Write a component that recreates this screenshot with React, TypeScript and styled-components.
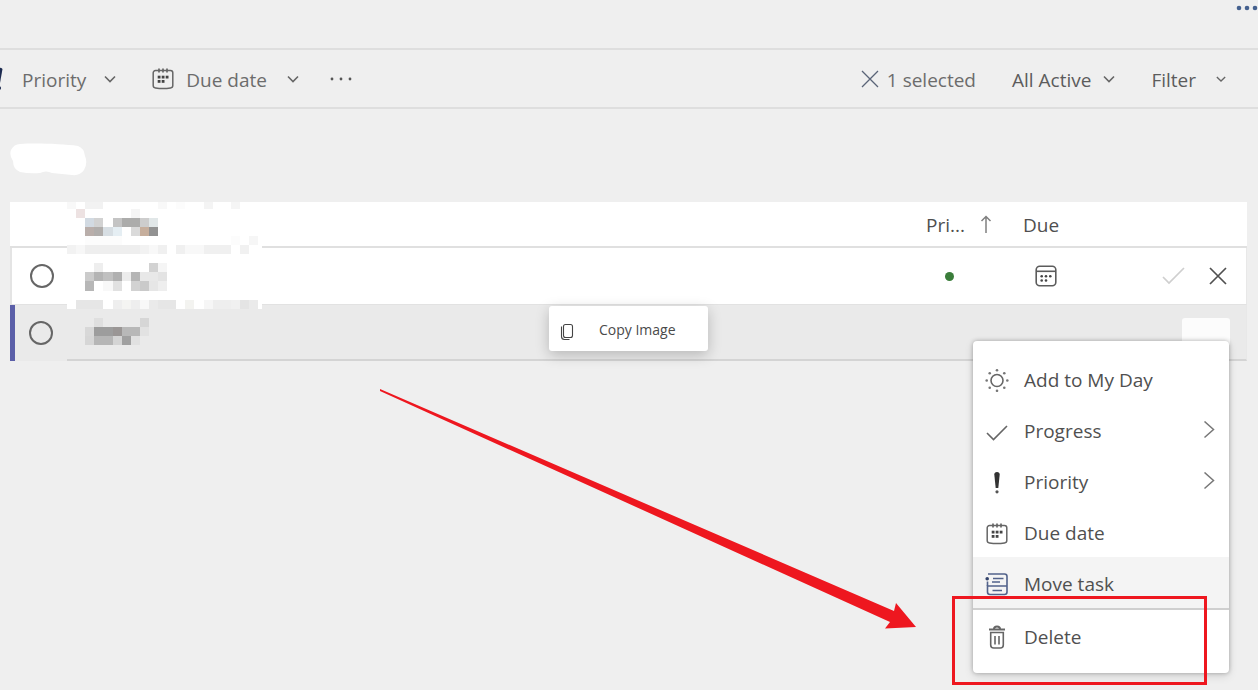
import React from "react";
import styled, { createGlobalStyle } from "styled-components";

const GlobalStyle = createGlobalStyle`
  * { box-sizing: border-box; }
  body { margin: 0; background: #efefef; }
  button { font: inherit; color: inherit; background: none; border: 0; padding: 0; cursor: pointer; }
`;

const Page = styled.div`
  position: relative;
  min-height: 100vh;
  overflow: hidden;
  background: #efefef;
  color: #555;
  font-family: "Open Sans", "Noto Sans", sans-serif;
  font-size: 19px;
  line-height: 26px;
`;

const TopBar = styled.header`
  display: flex;
  justify-content: flex-end;
  height: 48px;
`;

const MoreTop = styled.button`
  align-self: flex-start;
  height: 16px;
  line-height: 0;
`;

const Toolbar = styled.nav`
  display: flex;
  align-items: center;
  justify-content: space-between;
  height: 61px;
  border-top: 2px solid #dedede;
  border-bottom: 2px solid #dedede;
  padding: 2px 32px 0 0;
`;

const ToolGroup = styled.div<{ $gap: number }>`
  display: flex;
  align-items: center;
  gap: ${(p) => p.$gap}px;
`;

const ToolButton = styled.button<{ $gap?: number; $strong?: boolean }>`
  display: flex;
  align-items: center;
  gap: ${(p) => p.$gap ?? 12}px;
  white-space: nowrap;
  color: ${(p) => (p.$strong ? "#5c5c5c" : "#6c6c6c")};
  svg { flex: none; margin-bottom: 2px; }
`;

const Trailing = styled.span<{ $space: number }>`
  display: flex;
  margin-left: ${(p) => p.$space}px;
`;

const Main = styled.main`
  padding: 34px 11px 0 10px;
`;

const Heading = styled.h2`
  margin: 0 0 25px;
  height: 34px;
  line-height: 0;
`;

const TableArea = styled.div`
  position: relative;
`;

const TaskTable = styled.table`
  width: 100%;
  table-layout: fixed;
  border-collapse: separate;
  border-spacing: 0;
  th, td { padding: 0; text-align: left; font-weight: 400; vertical-align: middle; }
  th { color: #4f4f4f; }
`;

const HeadRow = styled.tr`
  height: 46px;
  background: #fff;
  th { border-bottom: 2px solid #e0e0e0; padding-top: 2px; }
`;

const BodyRow = styled.tr<{ $selected?: boolean }>`
  height: ${(p) => (p.$selected ? 56 : 57)}px;
  background: ${(p) => (p.$selected ? "#eaeaea" : "#fff")};
  td { border-bottom: ${(p) => (p.$selected ? 2 : 1)}px solid ${(p) => (p.$selected ? "#d4d4d4" : "#e2e2e2")}; }
  td:first-child {
    border-left: ${(p) => (p.$selected ? "5px solid #5b5fa8" : "2px solid #e4e4e4")};
    padding-left: ${(p) => (p.$selected ? 14 : 18)}px;
    ${(p) => (p.$selected ? "border-bottom: 0;" : "")}
  }
  td:last-child { border-right: 1px solid #e8e8e8; }
`;

const Col = styled.col<{ $w?: number }>`
  width: ${(p) => (p.$w ? `${p.$w}px` : "auto")};
`;

const Round = styled.input`
  appearance: none;
  display: block;
  width: 24px;
  height: 24px;
  margin: 0;
  border: 2px solid #666;
  border-radius: 50%;
`;

const SortLabel = styled.span`
  display: flex;
  align-items: center;
  gap: 14px;
`;

const PriorityDot = styled.span`
  display: block;
  width: 9px;
  height: 9px;
  margin-left: 19px;
  border-radius: 50%;
  background: #3a7d3a;
`;

const IconButton = styled.button`
  display: block;
  line-height: 0;
`;

const DueCell = styled.td`
  && { padding-left: 12px; }
`;

const Actions = styled.div<{ $right: number }>`
  display: flex;
  justify-content: flex-end;
  align-items: center;
  gap: 24px;
  padding-right: ${(p) => p.$right}px;
`;

const RowMore = styled.button`
  width: 48px;
  height: 28px;
  border-radius: 3px;
  background: #fcfcfc;
`;

const Mosaic = styled.svg`
  position: absolute;
  left: 57px;
  top: 0;
  pointer-events: none;
`;

const CopyTip = styled.button`
  position: absolute;
  left: calc(50% - 80px);
  top: 306px;
  display: flex;
  align-items: center;
  gap: 24px;
  width: 159px;
  height: 45px;
  padding: 2px 0 0 11px;
  border-radius: 3px;
  background: #fff;
  box-shadow: 0 4px 14px rgba(0, 0, 0, 0.22);
  && { font-size: 14px; color: #4a4a4a; }
  svg { margin-top: 4px; }
`;

const MenuLayer = styled.div`
  position: absolute;
  right: 29px;
  top: 341px;
  width: 256px;
`;

const Menu = styled.ul`
  list-style: none;
  margin: 0;
  padding: 12px 0;
  border-radius: 4px;
  background: #fff;
  box-shadow: 0 0 4px rgba(0, 0, 0, 0.28), 0 3px 10px rgba(0, 0, 0, 0.12);
`;

const MenuItem = styled.li<{ $hover?: boolean; $divided?: boolean }>`
  background: ${(p) => (p.$hover ? "#f4f4f4" : "transparent")};
  border-top: ${(p) => (p.$divided ? "2px solid #cfcfcf" : "0")};
`;

const MenuButton = styled.button`
  display: flex;
  align-items: center;
  gap: 15px;
  width: 100%;
  height: 51px;
  padding: 2px 14px 0 12px;
  text-align: left;
  color: #505050;
`;

const MenuText = styled.span`
  flex: 1;
`;

const Highlight = styled.div`
  position: absolute;
  left: -21px;
  right: 22px;
  top: 255px;
  height: 89px;
  border: 3px solid #ee171f;
  pointer-events: none;
`;

const Arrow = styled.svg`
  position: absolute;
  right: 342px;
  top: 389px;
  pointer-events: none;
`;

const Chevron = ({ size = 12, color = "#666" }: { size?: number; color?: string }) => (
  <svg width={size} height={size} viewBox="0 0 12 12" fill="none" stroke={color} strokeWidth="1.6">
    <path d="M1 3.5 6 8.5 11 3.5" />
  </svg>
);

const Dots = ({ color, r, step, width }: { color: string; r: number; step: number; width: number }) => (
  <svg width={width} height="16" fill={color}>
    {[0, 1, 2].map((i) => (
      <circle key={i} cx={3 + i * step} cy="8" r={r} />
    ))}
  </svg>
);

const CalendarIcon = () => (
  <svg width="22" height="22" viewBox="0 0 22 22" fill="none" stroke="#666" strokeWidth="1.5">
    <path d="M3.5 2.5h15a2.3 2.3 0 0 1 2.3 2.3v12.7c0 1.6-1 2.3-2.3 2.5-5 .8-10 .8-15 0-1.3-.2-2.3-.9-2.3-2.5V4.8A2.3 2.3 0 0 1 3.5 2.5Z" />
    <path d="M7 .5v4M11 .5v4M15 .5v4" strokeWidth="1.7" />
    <g fill="#444" stroke="none">
      <rect x="9.7" y="7.7" width="2.8" height="2.8" /><rect x="13.7" y="7.7" width="2.8" height="2.8" /><rect x="5.7" y="7.7" width="2.8" height="2.8" />
      <rect x="5.7" y="12" width="2.8" height="2.8" /><rect x="9.7" y="12" width="2.8" height="2.8" />
    </g>
  </svg>
);

const DueIcon = () => (
  <svg width="22" height="22" viewBox="0 0 22 22" fill="none" stroke="#5c5c5c" strokeWidth="1.6">
    <rect x="1.2" y="1.2" width="19.6" height="19.6" rx="3.5" />
    <path d="M1.2 6.3h19.6" />
    <g fill="#444" stroke="none">
      <circle cx="6.7" cy="11.3" r="1.3" /><circle cx="11" cy="11.3" r="1.3" /><circle cx="15.3" cy="11.3" r="1.3" />
      <circle cx="6.7" cy="15.5" r="1.3" /><circle cx="11" cy="15.5" r="1.3" />
    </g>
  </svg>
);

const Cross = ({ color, width = 1.5 }: { color: string; width?: number }) => (
  <svg width="18" height="18" viewBox="0 0 18 18" fill="none" stroke={color} strokeWidth={width}>
    <path d="M1 1 17 17M17 1 1 17" />
  </svg>
);

const Check = ({ color }: { color: string }) => (
  <svg width="24" height="22" viewBox="0 0 24 22" fill="none" stroke={color} strokeWidth="1.7">
    <path d="M2 12 8 18 23 3" />
  </svg>
);

const MenuIcon = ({ children, stroke = "#666" }: { children: React.ReactNode; stroke?: string }) => (
  <svg width="24" height="24" viewBox="0 0 24 24" fill="none" stroke={stroke} strokeWidth="1.6">
    {children}
  </svg>
);

const Sun = () => (
  <MenuIcon>
    <circle cx="12" cy="12.5" r="6" />
    <g stroke="none" fill="#777">
      {[0, 45, 90, 135, 180, 225, 270, 315].map((a) => (
        <circle key={a} cx={12 + 10.3 * Math.cos((a * Math.PI) / 180)} cy={12.5 + 10.3 * Math.sin((a * Math.PI) / 180)} r="1.3" />
      ))}
    </g>
  </MenuIcon>
);

const Bang = () => (
  <MenuIcon stroke="none">
    <path fill="#333" d="M9.3 4.500Q9.300 2 12 2t2.700 2.500L13.300 18h-2.600Z" />
    <circle cx="12" cy="21.800" r="1.600" fill="#555" />
  </MenuIcon>
);

const MoveIcon = () => (
  <MenuIcon stroke="#52628a">
    <path d="M3 2h16.500q2.500 0 2.500 2.500V20q0 2.500-2.500 2.500H5q-2.500 0-2.500-2.500v-6h19.500" />
    <path d="M2.500 14V9.500M8 6.500h10.500M7 10h8M7.500 18.500h9.500" />
    <circle cx="2.200" cy="6.800" r="1.800" fill="#33436b" stroke="none" />
  </MenuIcon>
);

const Trash = () => (
  <MenuIcon>
    <path d="M4 4.500h16" strokeWidth="2" />
    <path d="M9 4q0-2.500 3-2.500t3 2.500" strokeWidth="2" />
    <path d="M5.700 7.500h12.600v12.500q0 3-3 3h-6.600q-3 0-3-3Z" />
    <path d="M10 11v8.500M14 11v8.500" />
  </MenuIcon>
);

const ChevronRight = () => (
  <svg width="12" height="20" viewBox="0 0 12 20" fill="none" stroke="#777" strokeWidth="1.5">
    <path d="M1.500 .500 10.500 8.500 1.500 16.500" />
  </svg>
);

/* Blurred-out task names: [column, row, colour, span] on a coarse grid. */
const cells: [number, number, string, number?][] = [
  [0, 0, "#f8f8f8"], [2, 0, "#f2f2f2", 2], [10, 0, "#f8f8f8"], [12, 0, "#fcfcfc"], [15, 0, "#f4f4f4"], [18, 0, "#f5f5f5"],
  [1, 1, "#ede2e2"], [7, 1, "#f5f5f5"],
  [2, 2, "#d2dae2"], [3, 2, "#d2d2d2"], [5, 2, "#c4c4c4"], [6, 2, "#acacab", 2], [8, 2, "#cdcdcd"], [9, 2, "#e1e7e8"],
  [2, 3, "#b9aeaa"], [3, 3, "#b0adab"], [4, 3, "#d7dee3"], [5, 3, "#e5eef3"], [7, 3, "#dadada"], [8, 3, "#c6ae9c"], [9, 3, "#929292"],
  [2, 4, "#fcfcfc", 4], [20, 4, "#f6f6f6"], [18, 4, "#fcfcfc"],
  [0, 5, "#f2f2f2"], [1, 5, "#f7f7f7"], [2, 5, "#eeeeee", 6], [8, 5, "#f2f2f2"], [9, 5, "#f8f8f8"], [10, 5, "#f0f0f0"], [12, 5, "#f0f0f0"], [13, 5, "#f8f8f8", 2], [15, 5, "#f0f0f0", 3], [19, 5, "#f1f1f1"],
  [3, 7, "#eeeeee"], [9, 7, "#d2d2d2"], [10, 7, "#f5f5f5"],
  [2, 8, "#cbcbcb"], [3, 8, "#b4b4b4"], [4, 8, "#c0c0c0"], [5, 8, "#b0b0b0"], [6, 8, "#ececec"], [7, 8, "#b5b5b5"], [8, 8, "#e8e8e8", 2], [10, 8, "#e3e3e3"],
  [2, 9, "#b7b7b7"], [4, 9, "#f8f8f8"], [5, 9, "#e1e1e1"], [7, 9, "#d2d2d2"], [8, 9, "#cacaca"], [9, 9, "#e6e6e6"], [10, 9, "#eeeeee"],
  [1, 11, "#e6e6e6", 3], [5, 11, "#eeeeee"], [6, 11, "#f4f4f2"], [7, 11, "#eeeeee"], [8, 11, "#f8f8f8"], [9, 11, "#eaeaea"], [10, 11, "#e6e6e6", 2], [13, 11, "#f3f3f0"], [15, 11, "#f6f6f6"], [16, 11, "#eeeeee", 2], [18, 11, "#f0f0f0"], [19, 11, "#e4e4e4"], [20, 11, "#eaeaea"],
  [3, 13, "#dfdfdf"], [8, 13, "#d6d6d6"],
  [2, 14, "#d8d8d8"], [3, 14, "#9d9d9d", 2], [5, 14, "#9a9695"], [6, 14, "#b8b8b8", 2], [8, 14, "#e2e2e2"],
  [2, 15, "#d6d6d6"], [3, 15, "#b6b6b6", 2], [5, 15, "#d4d4d4"], [6, 15, "#a0a0a0"], [7, 15, "#e1e1e1"],
];

const NameMosaic = () => (
  <Mosaic width="195" height="156" viewBox="0 2.5 195 156" shapeRendering="crispEdges" aria-hidden="true">
    <rect x="0" y="45.5" width="195" height="9.1" fill="#fff" />
    <rect x="0" y="100" width="195" height="9.1" fill="#fff" />
    {cells.map(([c, r, fill, span = 1]) => (
      <rect key={`${c}-${r}`} x={c * 9.1} y={r * 9.1} width={span * 9.1} height="9.1" fill={fill} />
    ))}
  </Mosaic>
);

const menu = [
  { label: "Add to My Day", icon: <Sun /> },
  { label: "Progress", icon: <MenuIcon><path d="M2 14 8.500 20.500 22 7" /></MenuIcon>, sub: true },
  { label: "Priority", icon: <Bang />, sub: true },
  { label: "Due date", icon: <MenuIcon><g transform="translate(1 2)"><CalendarIcon /></g></MenuIcon> },
  { label: "Move task", icon: <MoveIcon />, hover: true },
  { label: "Delete", icon: <Trash />, divided: true },
];

export default function App() {
  return (
    <Page>
      <GlobalStyle />
      <TopBar>
        <MoreTop aria-label="More options"><Dots color="#45618f" r={2.3} step={8} width={22} /></MoreTop>
      </TopBar>
      <Toolbar>
        <ToolGroup $gap={30}>
          <ToolGroup $gap={36}>
            <ToolButton $gap={18}>
              <svg width="4" height="26" viewBox="0 0 4 26">
                <path d="M-4 4Q0 0 2.5 3L0 17h-3Z" fill="#1d2b50" />
                <circle cx="-1" cy="22" r="2" fill="#1d2b50" />
              </svg>
              Priority
              <Trailing $space={0}><Chevron /></Trailing>
            </ToolButton>
            <ToolButton>
              <CalendarIcon />
              Due date
              <Trailing $space={8}><Chevron /></Trailing>
            </ToolButton>
          </ToolGroup>
          <ToolButton aria-label="More"><Dots color="#555" r={1.4} step={9} width={24} /></ToolButton>
        </ToolGroup>
        <ToolGroup $gap={36}>
          <ToolButton $gap={8}><Cross color="#5a6478" width={1.3} />1 selected</ToolButton>
          <ToolButton $gap={12} $strong>All Active<Trailing $space={0}><Chevron /></Trailing></ToolButton>
          <ToolButton $gap={20} $strong>Filter<Chevron size={10} /></ToolButton>
        </ToolGroup>
      </Toolbar>
      <Main>
        <Heading>
          <svg width="78" height="34" viewBox="0 0 78 34" role="img" aria-label="Hidden group name">
            <path fill="#fff" d="M10 1C28 0 52 1 68 3Q74 5 75 13Q78 20 74 27Q70 33 62 32L42 30Q36 27 30 30Q20 31 10 29Q3 26 3 18Q-1 12 1 7Q4 1 10 1Z" />
          </svg>
        </Heading>
        <TableArea>
          <TaskTable>
            <colgroup>
              <Col $w={57} /><Col /><Col $w={97} /><Col $w={110} /><Col $w={114} />
            </colgroup>
            <thead>
              <HeadRow>
                <th /><th />
                <th scope="col">
                  <SortLabel>
                    Pri...
                    <svg width="14" height="20" viewBox="0 0 14 20" fill="none" stroke="#808080" strokeWidth="1.5">
                      <path d="M7 18V2M2.5 6 7 1.5 11.5 6" />
                    </svg>
                  </SortLabel>
                </th>
                <th scope="col">Due</th>
                <th />
              </HeadRow>
            </thead>
            <tbody>
              <BodyRow>
                <td><Round type="checkbox" aria-label="Complete first task" /></td>
                <td />
                <td><PriorityDot /></td>
                <DueCell><IconButton aria-label="Set due date"><DueIcon /></IconButton></DueCell>
                <td>
                  <Actions $right={19}>
                    <IconButton aria-label="Save"><Check color="#cfcfcf" /></IconButton>
                    <IconButton aria-label="Cancel"><Cross color="#505050" width={1.7} /></IconButton>
                  </Actions>
                </td>
              </BodyRow>
              <BodyRow $selected>
                <td><Round type="checkbox" aria-label="Complete second task" /></td>
                <td /><td /><td />
                <td><Actions $right={16}><RowMore aria-label="Task options" /></Actions></td>
              </BodyRow>
            </tbody>
          </TaskTable>
          <NameMosaic />
        </TableArea>
      </Main>
      <Arrow width="537" height="240" viewBox="379 389 537 240" aria-hidden="true">
        <path fill="#ee171f" d="M380 389 894 611 896 603 916 627 885 628.5 890 622 380 391Z" />
      </Arrow>
      <CopyTip>
        <svg width="15" height="18" viewBox="0 0 15 18" fill="none" stroke="#444" strokeWidth="1.1">
          <rect x="3.5" y="1.5" width="9" height="13" rx="2" />
          <path d="M1.5 3.5V13.5Q1.5 16.5 4.5 16.5H9.5" />
        </svg>
        Copy Image
      </CopyTip>
      <MenuLayer>
        <Menu>
          {menu.map((m) => (
            <MenuItem key={m.label} $hover={m.hover} $divided={m.divided}>
              <MenuButton>
                {m.icon}
                <MenuText>{m.label}</MenuText>
                {m.sub && <ChevronRight />}
              </MenuButton>
            </MenuItem>
          ))}
        </Menu>
        <Highlight />
      </MenuLayer>
    </Page>
  );
}
